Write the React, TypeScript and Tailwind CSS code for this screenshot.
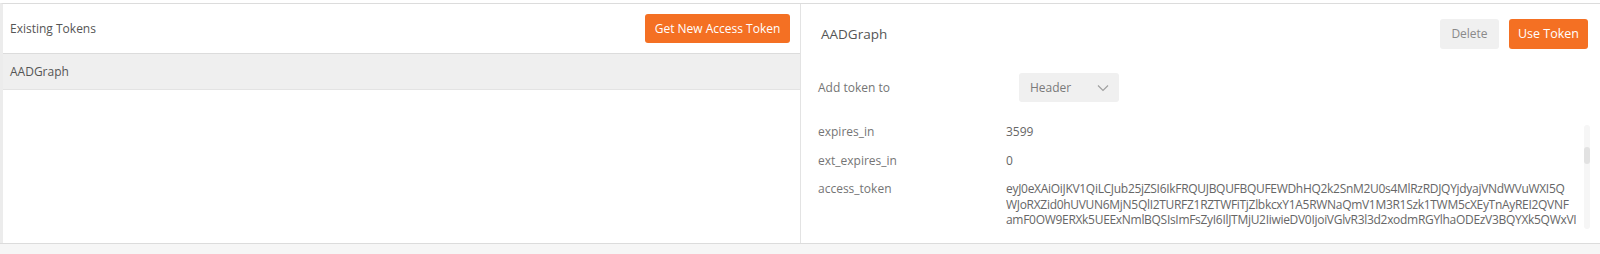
import React from "react";

const tokenLines = [
  "eyJ0eXAiOiJKV1QiLCJub25jZSI6IkFRQUJBQUFBQUFEWDhHQ2k2SnM2U0s4MlRzRDJQYjdyajVNdWVuWXI5Q",
  "WJoRXZid0hUVUN6MjN5QlI2TURFZ1RZTWFiTjZlbkcxY1A5RWNaQmV1M3R1Szk1TWM5cXEyTnAyREI2QVNF",
  "amF0OW9ERXk5UEExNmlBQSIsImFsZyI6IlJTMjU2IiwieDV0IjoiVGlvR3l3d2xodmRGYlhaODEzV3BQYXk5QWxVI",
];

export default function App() {
  return (
    <div className="w-[1600px] h-[254px] bg-white flex flex-col font-['Open_Sans',sans-serif] text-[12px] text-[#505050] overflow-hidden">
      <div className="h-[3px] shrink-0" />
      <div className="flex h-[240px] shrink-0 border-t border-[#dcdcdc] border-l-[3px] border-l-[#ececec]">
        {/* Left panel */}
        <div className="w-[798px] shrink-0 border-r border-[#e3e3e3] flex flex-col">
          <div className="h-[50px] flex items-center justify-between pl-[7px] pr-[10px] border-b border-[#dcdcdc]">
            <span className="text-[12px] text-[#555555]">Existing Tokens</span>
            <button className="h-[29px] w-[145px] rounded-[3px] bg-[#f47023] text-white text-[12px] flex items-center justify-center">
              Get New Access Token
            </button>
          </div>
          <div className="h-[36px] bg-[#efefef] border-b border-[#e3e3e3] flex items-center pl-[7px] text-[12px] text-[#555555]">
            AADGraph
          </div>
        </div>
        {/* Right panel */}
        <div className="flex-1 flex flex-col min-w-0">
          <div className="pt-[15px] pr-[12px] pl-[20px] flex items-center justify-between">
            <span className="text-[13.5px] text-[#555555]">AADGraph</span>
            <div className="flex gap-[10px]">
              <button className="h-[30px] w-[59px] rounded-[3px] bg-[#f0f0f0] text-[#8a8a8a] text-[12px]">
                Delete
              </button>
              <button className="h-[30px] w-[79px] rounded-[3px] bg-[#f47023] text-white text-[12.5px]">
                Use Token
              </button>
            </div>
          </div>
          <div className="mt-[24px] flex items-center pl-[17px] h-[29px]">
            <span className="w-[201px] text-[12px] text-[#757575]">Add token to</span>
            <div className="w-[100px] h-[29px] rounded-[3px] bg-[#f0f0f0] flex items-center justify-between pl-[11px] pr-[10px] text-[#7a7a7a] text-[12px]">
              <span>Header</span>
              <svg width="12" height="8" viewBox="0 0 12 8" fill="none">
                <path d="M1 1.5 L6 6.5 L11 1.5" stroke="#a0a0a0" strokeWidth="1.2" />
              </svg>
            </div>
          </div>
          <div className="mt-[15px] flex flex-1 min-h-0">
            <div className="flex-1 min-w-0 pl-[17px] flex flex-col overflow-hidden">
              <div className="h-[29px] flex items-center">
                <span className="w-[188px] shrink-0 text-[#757575]">expires_in</span>
                <span className="text-[#666666]">3599</span>
              </div>
              <div className="h-[29px] flex items-center">
                <span className="w-[188px] shrink-0 text-[#757575]">ext_expires_in</span>
                <span className="text-[#666666]">0</span>
              </div>
              <div className="flex items-start pt-[6px]">
                <span className="w-[188px] shrink-0 text-[#757575] leading-[15.5px]">access_token</span>
                <div className="flex flex-col leading-[15.5px] text-[#666666] overflow-hidden">
                  {tokenLines.map((l, i) => (
                    <span key={i} className="whitespace-nowrap tracking-[-0.3px]">
                      {l}
                    </span>
                  ))}
                </div>
              </div>
            </div>
            <div className="w-[6px] shrink-0 ml-[6px] mr-[10px] mt-[8px] mb-[14px] rounded-[3px] bg-[#f6f6f6] flex flex-col">
              <div className="mt-[22px] h-[17px] rounded-[3px] bg-[#e2e2e2]" />
            </div>
          </div>
        </div>
      </div>
      <div className="flex-1 bg-[#f6f6f6] border-t border-[#dcdcdc]" />
    </div>
  );
}
